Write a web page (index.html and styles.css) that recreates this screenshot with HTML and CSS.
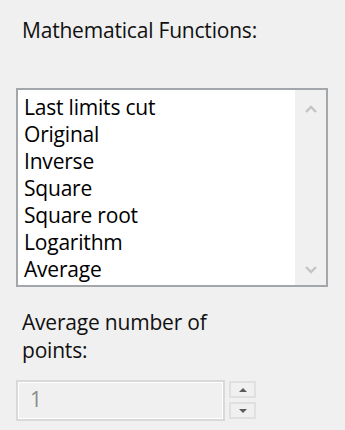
FILE: index.html
```html
<!DOCTYPE html>
<html lang="en">

<head>
  <meta charset="UTF-8">
  <meta name="viewport" content="width=device-width, initial-scale=1.0">
  <title>Mathematical Functions</title>
  <link rel="stylesheet" href="styles.css">
</head>

<body>
  <div class="panel">
    <div class="title">Mathematical Functions:</div>

    <!-- 函数列表 -->
    <div class="listbox">
      <ul class="items">
        <li>Last limits cut</li>
        <li>Original</li>
        <li>Inverse</li>
        <li>Square</li>
        <li>Square root</li>
        <li>Logarithm</li>
        <li>Average</li>
      </ul>
      <div class="scrollbar">
        <svg class="arrow" width="14" height="10" viewBox="0 0 14 10">
          <path d="M2 8 L7 3 L12 8" fill="none" stroke="#c4c4c4" stroke-width="2.4" />
        </svg>
        <svg class="arrow" width="14" height="10" viewBox="0 0 14 10">
          <path d="M2 2 L7 7 L12 2" fill="none" stroke="#c4c4c4" stroke-width="2.4" />
        </svg>
      </div>
    </div>

    <div class="label">Average number of<br>points:</div>

    <!-- 数字输入框 -->
    <div class="spin">
      <div class="spin-input">1</div>
      <div class="spin-buttons">
        <div class="spin-btn">
          <svg width="10" height="6" viewBox="0 0 10 6"><path d="M1 5 L5 1 L9 5 Z" fill="#5a5a5a" /></svg>
        </div>
        <div class="spin-btn">
          <svg width="10" height="6" viewBox="0 0 10 6"><path d="M1 1 L5 5 L9 1 Z" fill="#5a5a5a" /></svg>
        </div>
      </div>
    </div>
  </div>
</body>

</html>
```

FILE: styles.css
```css
body {
  margin: 0;
  background: #f0f0f0;
  font-family: "Open Sans", "Noto Sans", sans-serif;
  font-size: 21px;
  color: #000;
}

.panel {
  padding: 17px 0 0 16px;
}

/* 标题 */
.title {
  padding-left: 6px;
  line-height: 27px;
  color: #111;
  letter-spacing: -0.2px;
}

/* 列表框 */
.listbox {
  display: flex;
  width: 312px;
  height: 199px;
  margin-top: 44px;
  box-sizing: border-box;
  background: #fff;
  border: 2px solid #a3a6ab;
}

.items {
  flex: 1;
  margin: 0;
  padding: 4px 0 0 6px;
  list-style: none;
  line-height: 27px;
  letter-spacing: -0.2px;
}

.scrollbar {
  display: flex;
  flex-direction: column;
  justify-content: space-between;
  align-items: center;
  width: 31px;
  padding: 14px 0 10px;
  box-sizing: border-box;
  background: #f0f0f0;
}

/* 平均点数 */
.label {
  margin-top: 21px;
  padding-left: 6px;
  line-height: 28px;
  color: #111;
  letter-spacing: -0.2px;
}

.spin {
  display: flex;
  gap: 4px;
  margin-top: 16px;
}

.spin-input {
  width: 209px;
  height: 41px;
  box-sizing: border-box;
  padding-left: 12px;
  line-height: 35px;
  color: #8a8a8a;
  background: #f0f0f0;
  border: 2px solid #d9d9d9;
  box-shadow: inset 0 0 0 1px #fff;
}

.spin-buttons {
  display: flex;
  flex-direction: column;
  gap: 4px;
  padding-top: 1px;
}

.spin-btn {
  display: flex;
  justify-content: center;
  align-items: center;
  width: 27px;
  height: 17px;
  box-sizing: border-box;
  background: #f0f0f0;
  border: 2px solid #e0e0e0;
}
```
